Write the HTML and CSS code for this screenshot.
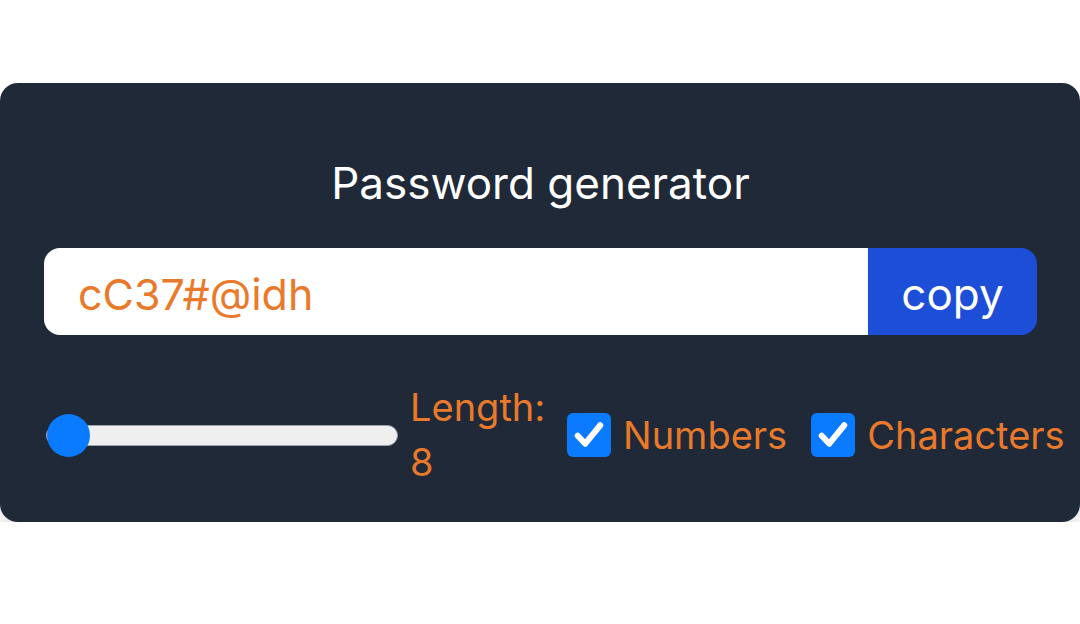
FILE: index.html
```html
<!DOCTYPE html>
<html lang="en">
<head>
<meta charset="UTF-8">
<meta name="viewport" content="width=device-width, initial-scale=1.0">
<title>Password generator</title>
<link rel="stylesheet" href="styles.css">
</head>
<body>

<div class="card">
    <h1>Password generator</h1>
    <div class="output-row">
        <input type="text" id="password" class="password" value="cC37#@idh" readonly>
        <button type="button" class="copy-btn">copy</button>
    </div>
    <div class="controls">
        <input type="range" id="length" class="slider" min="8" max="50" value="8">
        <label for="length" class="length-label">Length: 8</label>
        <label class="check">
            <input type="checkbox" checked>
            <span class="box"><svg viewBox="0 0 24 24" width="36" height="36"><path d="M4.5 12.5 L9.5 17.8 L19.5 5.5" fill="none" stroke="#fff" stroke-width="4" stroke-linecap="round" stroke-linejoin="round"/></svg></span>
            Numbers
        </label>
        <label class="check">
            <input type="checkbox" checked>
            <span class="box"><svg viewBox="0 0 24 24" width="36" height="36"><path d="M4.5 12.5 L9.5 17.8 L19.5 5.5" fill="none" stroke="#fff" stroke-width="4" stroke-linecap="round" stroke-linejoin="round"/></svg></span>
            Characters
        </label>
    </div>
</div>

</body>
</html>
```

FILE: styles.css
```css
body {
    font-family: Inter, "Noto Sans", sans-serif;
    background-color: #fff;
    margin: 0;
    padding: 0;
}
.card {
    margin-top: 83px;
    background-color: #1f2937;
    border-radius: 18px;
    padding: 76px 43px 32px 44px;
    box-shadow: 0 10px 18px rgba(0, 0, 0, 0.12);
}
h1 {
    margin: 0;
    color: #fff;
    font-size: 44px;
    font-weight: 400;
    line-height: 48px;
    text-align: center;
}
.output-row {
    display: flex;
    margin-top: 41px;
    height: 87px;
}
.password {
    flex: 1;
    min-width: 0;
    border: none;
    outline: none;
    border-radius: 16px 0 0 16px;
    padding: 4px 34px 0;
    font-family: inherit;
    font-size: 43px;
    color: #e97a2b;
    background-color: #fff;
}
.copy-btn {
    width: 169px;
    border: none;
    border-radius: 0 16px 16px 0;
    background-color: #1d4ed8;
    color: #fff;
    font-family: inherit;
    font-size: 44px;
    padding: 4px 0 0;
    cursor: pointer;
}
.controls {
    display: flex;
    align-items: center;
    margin-top: 45px;
    color: #e97a2b;
    font-size: 38px;
}
.slider {
    -webkit-appearance: none;
    appearance: none;
    flex-shrink: 0;
    width: 352px;
    height: 44px;
    margin: 0 12px 0 2px;
    background: transparent;
}
.slider::-webkit-slider-runnable-track {
    height: 21px;
    background-color: #efefef;
    border: 1px solid #9ca3af;
    border-radius: 12px;
}
.slider::-webkit-slider-thumb {
    -webkit-appearance: none;
    width: 43px;
    height: 43px;
    margin-top: -12px;
    border-radius: 50%;
    background-color: #0a7bff;
    border: none;
}
.length-label {
    flex-shrink: 0;
    width: 140px;
    line-height: 55px;
    margin-right: 17px;
}
.check {
    flex-shrink: 0;
    display: flex;
    align-items: center;
    gap: 12px;
    margin-right: 24px;
    white-space: nowrap;
}
.check input {
    display: none;
}
.box {
    display: flex;
    align-items: center;
    justify-content: center;
    width: 44px;
    height: 44px;
    border-radius: 6px;
    background-color: #0a7bff;
}
```
